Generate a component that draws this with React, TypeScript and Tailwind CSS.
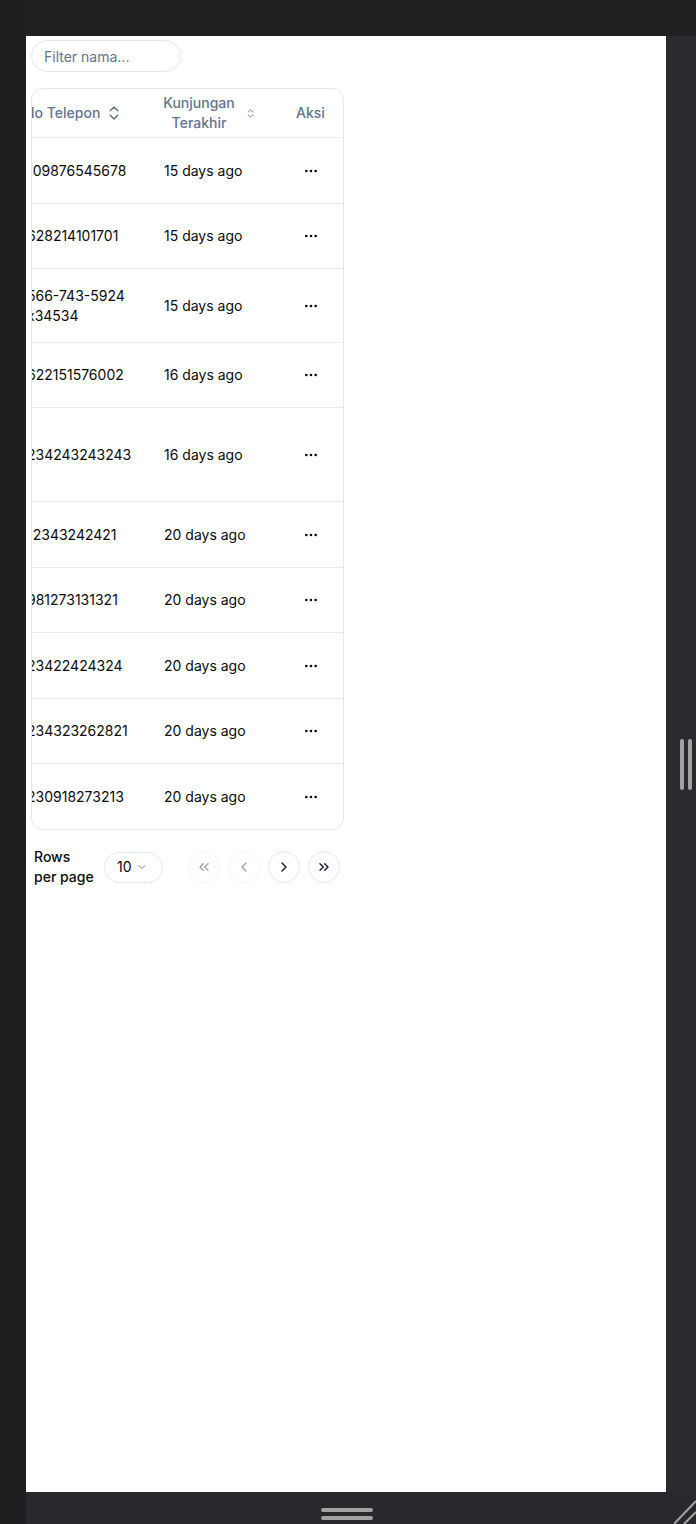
import { ChevronDown, ChevronLeft, ChevronRight, ChevronsLeft, ChevronsRight, ChevronsUpDown, MoreHorizontal } from 'lucide-react';

interface Visitor {
  phone: string;
  lastVisit: string;
  height: string;
}

const visitors: Visitor[] = [
  { phone: '109876545678', lastVisit: '15 days ago', height: 'h-[66px]' },
  { phone: '628214101701', lastVisit: '15 days ago', height: 'h-[65px]' },
  { phone: '566-743-5924 x34534', lastVisit: '15 days ago', height: 'h-[74px]' },
  { phone: '622151576002', lastVisit: '16 days ago', height: 'h-[65px]' },
  { phone: '234243243243', lastVisit: '16 days ago', height: 'h-[94px]' },
  { phone: '12343242421', lastVisit: '20 days ago', height: 'h-[66px]' },
  { phone: '981273131321', lastVisit: '20 days ago', height: 'h-[65px]' },
  { phone: '23422424324', lastVisit: '20 days ago', height: 'h-[66px]' },
  { phone: '234323262821', lastVisit: '20 days ago', height: 'h-[65px]' },
  { phone: '230918273213', lastVisit: '20 days ago', height: 'h-[65px]' },
];

function PageButton({ children, disabled = false }: { children: React.ReactNode; disabled?: boolean }) {
  return (
    <button
      disabled={disabled}
      className={
        disabled
          ? 'flex h-8 w-8 items-center justify-center rounded-full border border-slate-200 text-slate-900 opacity-40'
          : 'flex h-8 w-8 items-center justify-center rounded-full border border-slate-200 text-slate-900'
      }
    >
      {children}
    </button>
  );
}

function VisitorTable() {
  return (
    <div className="mt-4 w-[313px] overflow-hidden rounded-xl border border-slate-200">
      <div className="-ml-[29px] w-[340px]">
        <div className="grid h-[49px] grid-cols-[144px_133px_63px] border-b border-[#e8ecf1] text-sm font-medium text-slate-500">
          <div className="flex items-center gap-[5px] pl-[21px]">
            <span>No Telepon</span>
            <ChevronsUpDown className="h-[18px] w-[18px]" />
          </div>
          <div className="flex items-center gap-[10px] pl-4">
            <span className="w-[72px] text-center leading-5">Kunjungan Terakhir</span>
            <ChevronsUpDown className="h-[11px] w-[11px]" />
          </div>
          <div className="flex items-center justify-center pr-[2px]">Aksi</div>
        </div>
        {visitors.map((v, i) => (
          <div
            key={i}
            className={`grid grid-cols-[144px_133px_63px] text-sm text-[#0a0a0a] ${v.height} ${
              i < visitors.length - 1 ? 'border-b border-[#e8ecf1]' : ''
            }`}
          >
            <div className="flex items-center overflow-hidden pl-6 pr-4 leading-5">
              <span className="break-words">{v.phone}</span>
            </div>
            <div className="flex items-center pl-[17px] pr-4">{v.lastVisit}</div>
            <div className="flex items-center justify-center pr-[2px]">
              <MoreHorizontal className="h-4 w-4" />
            </div>
          </div>
        ))}
      </div>
    </div>
  );
}

function Pagination() {
  return (
    <div className="mt-[17px] flex w-[313px] items-center">
      <div className="ml-[3px] w-[62px] text-sm font-medium leading-5 text-[#0a0a0a]">Rows per page</div>
      <button className="ml-2 flex h-[31px] w-[59px] items-center gap-1 rounded-full border border-slate-200 pl-3 text-sm text-[#0a0a0a]">
        <span>10</span>
        <ChevronDown className="h-3 w-3 opacity-50" />
      </button>
      <div className="ml-[25px] flex items-center gap-2">
        <PageButton disabled>
          <ChevronsLeft className="h-4 w-4" />
        </PageButton>
        <PageButton disabled>
          <ChevronLeft className="h-4 w-4" />
        </PageButton>
        <PageButton>
          <ChevronRight className="h-4 w-4" />
        </PageButton>
        <PageButton>
          <ChevronsRight className="h-4 w-4" />
        </PageButton>
      </div>
    </div>
  );
}

export default function App() {
  return (
    <div className="flex h-[1524px] w-[696px] overflow-hidden bg-[#212124] font-[Inter,'Noto_Sans',sans-serif]">
      <div className="w-[26px] shrink-0 bg-[#1f1f21]" />
      <div className="flex flex-1 flex-col">
        <div className="h-[36px] shrink-0" />
        <div className="flex flex-1">
          <div className="flex-1 bg-white pl-[5px] pt-1">
            <input
              placeholder="Filter nama..."
              className="h-8 w-[150px] rounded-full border border-slate-200 px-3 text-sm text-slate-900 outline-none placeholder:text-slate-500"
            />
            <VisitorTable />
            <Pagination />
          </div>
          <div className="flex w-[30px] shrink-0 items-center gap-1 bg-[#2a2b2f] pl-[14px]">
            <div className="h-[51px] w-1 rounded-sm bg-[#a3a3a3]" />
            <div className="h-[51px] w-1 rounded-sm bg-[#a3a3a3]" />
          </div>
        </div>
        <div className="relative h-[32px] shrink-0 bg-[#28292c] pl-[295px] pt-4">
          <div className="flex w-[52px] flex-col gap-1">
            <div className="h-1 rounded-full bg-[#a3a3a3]" />
            <div className="h-1 rounded-full bg-[#a3a3a3]" />
          </div>
          <svg className="absolute bottom-0 right-0" width="22" height="24" viewBox="0 0 22 24">
            <line x1="0" y1="24" x2="22" y2="1" stroke="#a3a3a3" strokeWidth="2" />
            <line x1="10" y1="24" x2="22" y2="12" stroke="#a3a3a3" strokeWidth="2" />
          </svg>
        </div>
      </div>
    </div>
  );
}
